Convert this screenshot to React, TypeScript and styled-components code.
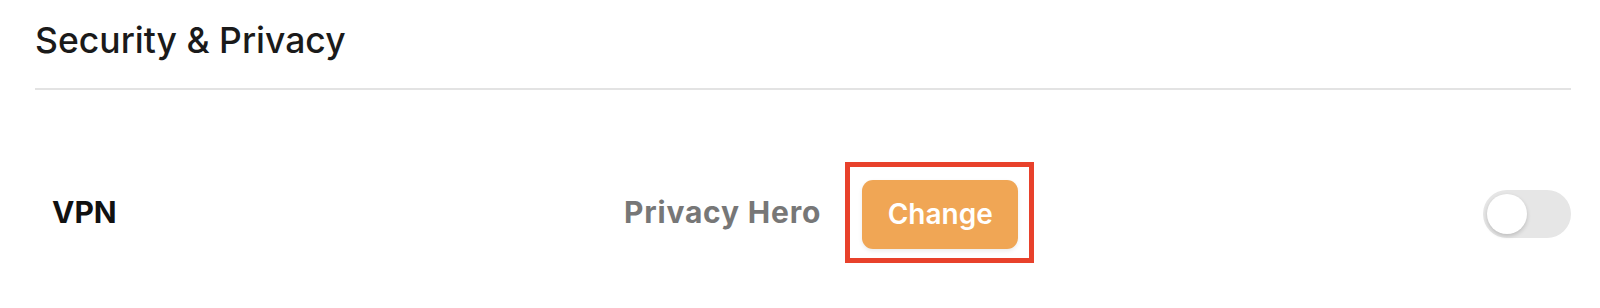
import React, { useState } from 'react'
import styled, { createGlobalStyle } from 'styled-components'

const GlobalStyle = createGlobalStyle`
  html, body {
    margin: 0;
    padding: 0;
    background: #ffffff;
    font-family: Inter, "Noto Sans", "Liberation Sans", sans-serif;
  }
`

const Page = styled.div`
  padding: 0 29px 0 35px;
`

const Header = styled.div`
  height: 88px;
  border-bottom: 2px solid #e3e3e3;
  display: flex;
  align-items: flex-start;
`

const Title = styled.h2`
  margin: 21px 0 0 0;
  font-size: 35.5px;
  line-height: 40px;
  font-weight: 500;
  color: #1a1a1a;
`

const Row = styled.div`
  margin-top: 71px;
  height: 102px;
  display: flex;
  align-items: center;
  padding-left: 17px;
`

const Label = styled.div`
  width: 572px;
  font-size: 30px;
  font-weight: 700;
  color: #111111;
`

const Value = styled.div`
  font-size: 30px;
  font-weight: 700;
  letter-spacing: 0.8px;
  color: #777777;
`

const Highlight = styled.div`
  margin-left: 24px;
  border: 5px solid #e8412b;
  padding: 13px 11px 9px 12px;
  display: flex;
`

const ChangeButton = styled.button`
  width: 156px;
  height: 69px;
  border: none;
  border-radius: 11px;
  background: #f0a655;
  color: #ffffff;
  font-family: inherit;
  font-size: 28px;
  font-weight: 600;
  box-shadow: 0 2px 4px rgba(0, 0, 0, 0.08);
  cursor: pointer;
`

interface SwitchProps {
  on: boolean
}

const Track = styled.div<SwitchProps>`
  margin-left: auto;
  margin-top: 3px;
  width: 88px;
  height: 48px;
  border-radius: 24px;
  background: ${props => props.on ? '#f0a655' : '#e6e6e6'};
  display: flex;
  align-items: center;
  justify-content: ${props => props.on ? 'flex-end' : 'flex-start'};
  padding: 0 4px;
  box-sizing: border-box;
  cursor: pointer;
`

const Knob = styled.div`
  width: 40px;
  height: 40px;
  border-radius: 50%;
  background: #ffffff;
  box-shadow: 0 2px 4px rgba(0, 0, 0, 0.18);
`

const App = () => {
  const [vpn, setVpn] = useState<boolean>(false)
  return (
    <>
      <GlobalStyle />
      <Page>
        <Header>
          <Title>Security &amp; Privacy</Title>
        </Header>
        <Row>
          <Label>VPN</Label>
          <Value>Privacy Hero</Value>
          <Highlight>
            <ChangeButton>Change</ChangeButton>
          </Highlight>
          <Track on={vpn} onClick={() => setVpn(!vpn)}>
            <Knob />
          </Track>
        </Row>
      </Page>
    </>
  )
}

export default App
